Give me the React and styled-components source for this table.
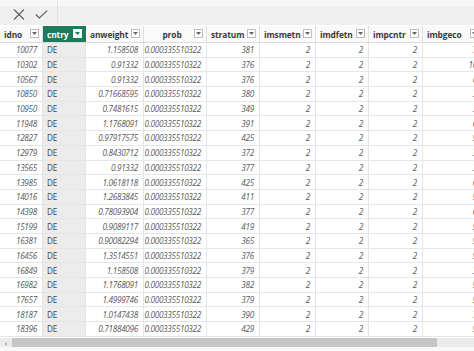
import styled, { createGlobalStyle } from "styled-components";

const GlobalStyle = createGlobalStyle`
  html, body {
    margin: 0;
    padding: 0;
    background: #ffffff;
  }
  body {
    font-family: "Open Sans", "Noto Sans", sans-serif;
  }
`;

const columns = [
  { key: "idno", width: 43, align: "right", italic: true },
  { key: "cntry", width: 43, align: "left", italic: false, selected: true },
  { key: "anweight", width: 58, align: "right", italic: true },
  { key: "prob", width: 63, align: "right", italic: true, headCenter: true },
  { key: "stratum", width: 53, align: "right", italic: true },
  { key: "imsmetn", width: 56, align: "right", italic: true },
  { key: "imdfetn", width: 53, align: "right", italic: true },
  { key: "impcntr", width: 54, align: "right", italic: true },
  { key: "imbgeco", width: 60, align: "right", italic: true },
];

const raw = [
  ["10077", "1.158508", "381", "7"],
  ["10302", "0.91332", "376", "10"],
  ["10567", "0.91332", "376", "6"],
  ["10850", "0.71668595", "380", "3"],
  ["10950", "0.7481615", "349", "3"],
  ["11948", "1.1768091", "391", "6"],
  ["12827", "0.97917575", "425", "9"],
  ["12979", "0.8430712", "372", "3"],
  ["13565", "0.91332", "377", "3"],
  ["13985", "1.0618118", "425", "6"],
  ["14016", "1.2683845", "411", "9"],
  ["14398", "0.78093904", "377", "6"],
  ["15199", "0.9089117", "419", "9"],
  ["16381", "0.90082294", "365", "9"],
  ["16456", "1.3514551", "376", "9"],
  ["16849", "1.158508", "379", "3"],
  ["16982", "1.1768091", "382", "9"],
  ["17657", "1.4999746", "379", "9"],
  ["18187", "1.0147438", "390", "7"],
  ["18396", "0.71884096", "429", "9"],
];

const rows = raw.map(([idno, anweight, stratum, imbgeco]) => ({
  idno,
  cntry: "DE",
  anweight,
  prob: "0.000335510322",
  stratum,
  imsmetn: "2",
  imdfetn: "2",
  impcntr: "2",
  imbgeco,
}));

const Page = styled.div`
  width: 474px;
  height: 351px;
  overflow: hidden;
  display: flex;
  flex-direction: column;
  background: #ffffff;
`;

const TopBar = styled.div`
  height: 25px;
  flex: none;
  display: flex;
  background: linear-gradient(#f7f7f7 0, #f7f7f7 6px, #efefef 6px);
`;

const ActionBox = styled.div`
  width: 58px;
  display: flex;
  align-items: center;
  gap: 10px;
  padding: 4px 0 0 13px;
  box-sizing: border-box;
  border-right: 1px solid #e2e2e2;
`;

const FormulaArea = styled.div`
  flex: 1;
`;

const Table = styled.div`
  flex: none;
  display: flex;
  flex-direction: column;
  width: 483px;
`;

const HeadRow = styled.div`
  display: flex;
  height: 16px;
  margin-top: 1px;
  border-bottom: 1px solid #dcdcdc;
  background: #fafafa;
`;

const HeadCell = styled.div`
  width: ${(p) => p.$w}px;
  flex: none;
  box-sizing: border-box;
  display: flex;
  align-items: center;
  justify-content: ${(p) => (p.$center ? "center" : "flex-start")};
  padding: 0 ${(p) => (p.$center ? "6px" : "14px")} 0 ${(p) => (p.$center ? "0" : "4px")};
  position: relative;
  font-size: 8.4px;
  font-weight: 700;
  letter-spacing: -0.1px;
  white-space: nowrap;
  color: ${(p) => (p.$selected ? "#ffffff" : "#3a3a3a")};
  background: ${(p) => (p.$selected ? "#1d7a5c" : "transparent")};
  border-right: 1px solid ${(p) => (p.$selected ? "#1d7a5c" : "#e0e0e0")};
`;

const DropButton = styled.span`
  position: absolute;
  right: 3px;
  top: 3px;
  width: 9px;
  height: 9px;
  box-sizing: border-box;
  background: #ffffff;
  border: 1px solid ${(p) => (p.$selected ? "#ffffff" : "#bdbdbd")};
  display: flex;
  align-items: center;
  justify-content: center;
`;

const Row = styled.div`
  display: flex;
  height: 14.7px;
  box-sizing: border-box;
  border-bottom: 1px solid #e6e6e6;
`;

const Cell = styled.div`
  width: ${(p) => p.$w}px;
  flex: none;
  box-sizing: border-box;
  display: flex;
  align-items: center;
  justify-content: ${(p) => (p.$align === "right" ? "flex-end" : "flex-start")};
  padding: 0 5px 0 4px;
  font-size: 8.2px;
  letter-spacing: -0.3px;
  font-style: ${(p) => (p.$italic ? "italic" : "normal")};
  color: ${(p) => (p.$italic ? "#5a5a5a" : "#444444")};
  background: ${(p) => (p.$selected ? "#ececec" : "transparent")};
  border-right: 1px solid #e4e4e4;
  white-space: nowrap;
`;

const ScrollBar = styled.div`
  height: 9px;
  flex: none;
  margin-top: 1px;
  display: flex;
  align-items: center;
  background: #ebebeb;
`;

const ScrollArrow = styled.span`
  width: 12px;
  display: flex;
  justify-content: center;
  font-size: 8px;
  color: #555555;
  line-height: 9px;
`;

const ScrollThumb = styled.div`
  width: 425px;
  height: 9px;
  background: #c6c6c6;
`;

const Bottom = styled.div`
  flex: 1;
  background: #f8f8f8;
`;

function CloseIcon() {
  return (
    <svg width="12" height="11" viewBox="0 0 12 11">
      <path d="M1 0.5L11 10.5M11 0.5L1 10.5" stroke="#5c5c5c" strokeWidth="1.1" fill="none" />
    </svg>
  );
}

function CheckIcon() {
  return (
    <svg width="13" height="9" viewBox="0 0 13 9">
      <path d="M0.8 4.5L4.3 8L12.3 0.6" stroke="#5c5c5c" strokeWidth="1.1" fill="none" />
    </svg>
  );
}

function Caret({ selected }) {
  return (
    <svg width="5" height="3" viewBox="0 0 5 3">
      <path d="M0 0H5L2.5 3Z" fill={selected ? "#1d7a5c" : "#666666"} />
    </svg>
  );
}

export default function App() {
  return (
    <Page>
      <GlobalStyle />
      <TopBar>
        <ActionBox>
          <CloseIcon />
          <CheckIcon />
        </ActionBox>
        <FormulaArea />
      </TopBar>
      <Table>
        <HeadRow>
          {columns.map((c) => (
            <HeadCell key={c.key} $w={c.width} $selected={c.selected} $center={c.headCenter}>
              {c.key}
              <DropButton $selected={c.selected}>
                <Caret selected={c.selected} />
              </DropButton>
            </HeadCell>
          ))}
        </HeadRow>
        {rows.map((r) => (
          <Row key={r.idno}>
            {columns.map((c) => (
              <Cell
                key={c.key}
                $w={c.width}
                $align={c.align}
                $italic={c.italic}
                $selected={c.selected}
              >
                {r[c.key]}
              </Cell>
            ))}
          </Row>
        ))}
      </Table>
      <ScrollBar>
        <ScrollArrow>‹</ScrollArrow>
        <ScrollThumb />
      </ScrollBar>
      <Bottom />
    </Page>
  );
}
